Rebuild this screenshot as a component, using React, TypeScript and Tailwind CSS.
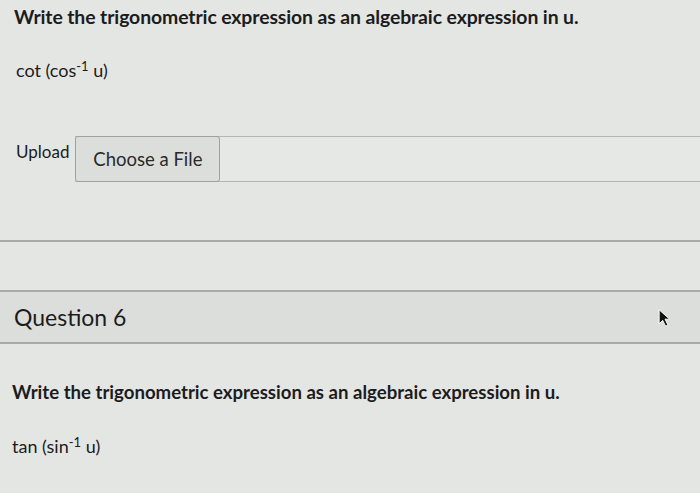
export default function App() {
  return (
    <div
      className="h-[493px] w-[700px] overflow-hidden bg-[#e4e6e4] text-[#1c1c1c]"
      style={{ fontFamily: "Lato, 'Open Sans', sans-serif" }}
    >
      {/* previous question body */}
      <div className="pl-[14px] pt-[5px]">
        <p className="text-[19.4px] font-bold leading-[24px] tracking-[-0.1px]">
          Write the trigonometric expression as an algebraic expression in u.
        </p>
        <p className="mt-[29px] pl-[2px] text-[18px] leading-[24px]">
          cot (cos<sup className="text-[13px]">-1</sup> u)
        </p>

        <div className="mt-[54px] flex items-start">
          <span className="pl-[2px] pt-[5px] text-[17px] leading-[22px]">Upload</span>
          <div className="ml-[6px] flex h-[46px] flex-1 border-y border-[#b4b6b4]">
            <button
              type="button"
              className="-my-px w-[145px] rounded-[3px] border border-[#9fa19f] bg-[#dcdedc] pt-[2px] text-[18.5px] text-[#2a2a2a]"
            >
              Choose a File
            </button>
            <div className="flex-1 bg-[#e6e8e6]" />
          </div>
        </div>
      </div>

      <div className="mt-[58px] h-[2px] bg-[#a9aba9]" />

      {/* question header */}
      <div className="mt-[48px] flex h-[54px] items-center justify-between border-y-2 border-[#a9aba9] bg-[#dcdedc] pl-[14px] pr-[28px]">
        <h2 className="text-[23px] leading-[28px]">Question 6</h2>
        <svg width="14" height="20" viewBox="0 0 12 16" className="mt-[2px]">
          <path d="M1 1 L1 13 L4 10 L6.5 15 L8.5 14 L6 9 L10 9 Z" fill="#111" stroke="#fff" strokeWidth="0.8" />
        </svg>
      </div>

      {/* question 6 body */}
      <div className="pl-[12px] pt-[36px]">
        <p className="text-[18.6px] font-bold leading-[24px]">
          Write the trigonometric expression as an algebraic expression in u.
        </p>
        <p className="mt-[30px] text-[18px] leading-[24px]">
          tan (sin<sup className="text-[13px]">-1</sup> u)
        </p>
      </div>
    </div>
  );
}
